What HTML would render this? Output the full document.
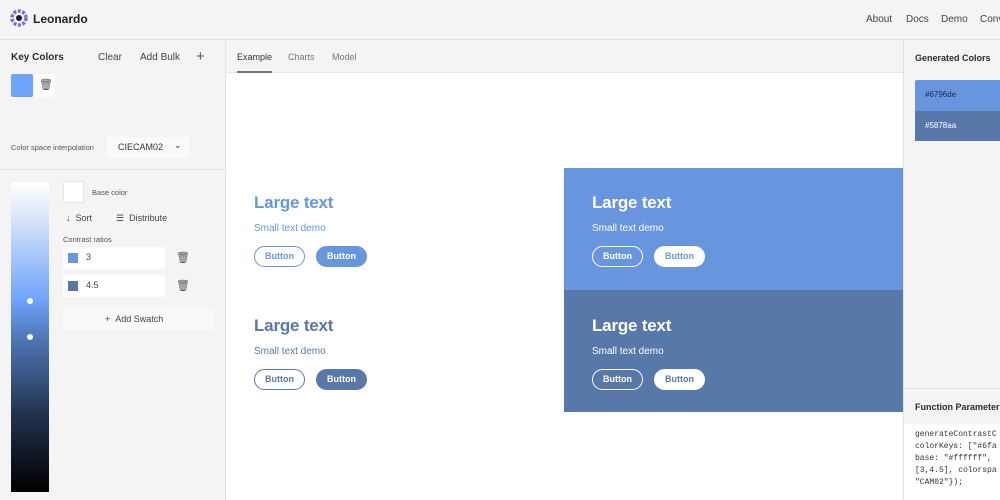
<!DOCTYPE html>
<html><head><style>
*{box-sizing:border-box;margin:0;padding:0}
body{width:1000px;height:500px;overflow:hidden;font-family:"Liberation Sans",sans-serif;background:#f4f4f4;position:relative;color:#2c2c2c}
.a{position:absolute}
.t{font-size:9px;color:#444}
.lg{position:absolute;font-size:17px;font-weight:bold;letter-spacing:-0.2px}
.btn{position:absolute;width:51px;height:21px;border-radius:11px;font-size:9px;font-weight:bold;text-align:center;line-height:18px}
</style></head><body>
<!-- header -->
<div class="a" style="left:0;top:0;width:1000px;height:40px;background:#f4f4f4;border-bottom:1px solid #e2e2e2"></div>
<svg class="a" style="left:10px;top:9px" width="18" height="18" viewBox="0 0 18 18"><circle cx="9" cy="9" r="7" fill="none" stroke="#7a6ee0" stroke-width="3.5" stroke-dasharray="3 1.5"/><circle cx="9" cy="9" r="3" fill="#1a1a3a"/></svg>
<div class="a" style="left:33px;top:12px;font-size:12px;font-weight:bold;color:#222">Leonardo</div>
<div class="a t" style="left:866px;top:14px;font-size:10px">About</div>
<div class="a t" style="left:906px;top:14px;font-size:10px">Docs</div>
<div class="a t" style="left:941px;top:14px;font-size:10px">Demo</div>
<div class="a t" style="left:980px;top:14px;font-size:10px">Conv</div>
<!-- left panel -->
<div class="a" style="left:225px;top:40px;width:1px;height:460px;background:#e2e2e2"></div>
<div class="a" style="left:11px;top:52px;font-size:10px;font-weight:bold">Key Colors</div>
<div class="a t" style="left:98px;top:52px;font-size:10px">Clear</div>
<div class="a t" style="left:140px;top:52px;font-size:10px">Add Bulk</div>
<div class="a" style="left:196px;top:48px;font-size:15px;color:#555">+</div>
<div class="a" style="left:11px;top:74px;width:22px;height:23px;background:#6fa3fb;border-radius:2px"></div>
<div class="a" style="left:34px;top:74px;width:21px;height:23px;background:#fbfbfb"></div>
<div class="a" style="left:39px;top:78px;font-size:11px;color:#555">🗑</div>
<div class="a" style="left:11px;top:143px;font-size:7.5px;color:#555">Color space interpolation</div>
<div class="a" style="left:107px;top:137px;width:82px;height:21px;background:#fafafa;border-radius:2px"></div>
<div class="a" style="left:118px;top:142px;font-size:9px;color:#333">CIECAM02</div>
<div class="a" style="left:174px;top:140px;font-size:9px;color:#333">⌄</div>
<div class="a" style="left:0;top:169px;width:225px;height:1px;background:#e2e2e2"></div>
<div class="a" style="left:11px;top:182px;width:38px;height:310px;background:linear-gradient(#fff 0%,#dfe8f8 10%,#6fa3fb 38%,#4c72b0 52%,#22324e 75%,#000 100%)"></div>
<div class="a" style="left:27px;top:298px;width:6px;height:6px;border-radius:50%;background:#fff"></div>
<div class="a" style="left:27px;top:334px;width:6px;height:6px;border-radius:50%;background:#fff"></div>
<div class="a" style="left:63px;top:181px;width:21px;height:22px;background:#fff;border:1px solid #e6e6e6;border-radius:2px"></div>
<div class="a" style="left:92px;top:188px;font-size:7.5px;color:#555">Base color</div>
<div class="a t" style="left:66px;top:213px">↓ &nbsp;Sort</div>
<div class="a t" style="left:116px;top:213px">☰ &nbsp;Distribute</div>
<div class="a" style="left:63px;top:235px;font-size:7.5px;color:#555">Contrast ratios</div>
<div class="a" style="left:63px;top:247px;width:102px;height:22px;background:#fff;border-radius:2px"></div>
<div class="a" style="left:68px;top:253px;width:10px;height:10px;background:#6796de"></div>
<div class="a t" style="left:86px;top:252px">3</div>
<div class="a" style="left:176px;top:251px;font-size:11px;color:#555">🗑</div>
<div class="a" style="left:63px;top:275px;width:102px;height:22px;background:#fff;border-radius:2px"></div>
<div class="a" style="left:68px;top:281px;width:10px;height:10px;background:#5878aa"></div>
<div class="a t" style="left:86px;top:280px">4.5</div>
<div class="a" style="left:176px;top:279px;font-size:11px;color:#555">🗑</div>
<div class="a" style="left:63px;top:309px;width:151px;height:21px;background:#f9f9f9;border-radius:2px"></div>
<div class="a t" style="left:105px;top:314px">+ &nbsp;Add Swatch</div>
<!-- tabs -->
<div class="a" style="left:226px;top:72px;width:677px;height:428px;background:#fff;border-top:1px solid #e6e6e6"></div>
<div class="a t" style="left:237px;top:52px;color:#333">Example</div>
<div class="a" style="left:237px;top:71px;width:35px;height:2px;background:#777"></div>
<div class="a t" style="left:288px;top:52px;color:#777">Charts</div>
<div class="a t" style="left:332px;top:52px;color:#777">Model</div>
<!-- demos -->
<div class="a" style="left:564px;top:168px;width:339px;height:122px;background:#6796de"></div>
<div class="a" style="left:564px;top:290px;width:339px;height:122px;background:#5878aa"></div>
<div class="lg" style="left:254px;top:193px;color:#6796de">Large text</div>
<div class="a" style="left:254px;top:223px;font-size:10px;color:#6796de">Small text demo</div>
<div class="btn" style="left:254px;top:246px;border:1.5px solid #6796de;color:#6796de">Button</div>
<div class="btn" style="left:316px;top:246px;background:#6796de;color:#fff;border:1.5px solid #6796de">Button</div>
<div class="lg" style="left:254px;top:316px;color:#5878aa">Large text</div>
<div class="a" style="left:254px;top:346px;font-size:10px;color:#5878aa">Small text demo</div>
<div class="btn" style="left:254px;top:369px;border:1.5px solid #5878aa;color:#5878aa">Button</div>
<div class="btn" style="left:316px;top:369px;background:#5878aa;color:#fff;border:1.5px solid #5878aa">Button</div>
<div class="lg" style="left:592px;top:193px;color:#fff">Large text</div>
<div class="a" style="left:592px;top:223px;font-size:10px;color:#fff">Small text demo</div>
<div class="btn" style="left:592px;top:246px;border:1.5px solid #fff;color:#fff">Button</div>
<div class="btn" style="left:654px;top:246px;background:#fff;color:#6796de;border:1.5px solid #fff">Button</div>
<div class="lg" style="left:592px;top:316px;color:#fff">Large text</div>
<div class="a" style="left:592px;top:346px;font-size:10px;color:#fff">Small text demo</div>
<div class="btn" style="left:592px;top:369px;border:1.5px solid #fff;color:#fff">Button</div>
<div class="btn" style="left:654px;top:369px;background:#fff;color:#5878aa;border:1.5px solid #fff">Button</div>
<!-- right panel -->
<div class="a" style="left:903px;top:40px;width:1px;height:460px;background:#e2e2e2"></div>
<div class="a" style="left:915px;top:53px;font-size:9px;font-weight:bold">Generated Colors</div>
<div class="a" style="left:915px;top:80px;width:85px;height:31px;background:#6796de;border-radius:2px 0 0 0"></div>
<div class="a" style="left:925px;top:90px;font-size:8px;color:#1a2a4a">#6796de</div>
<div class="a" style="left:915px;top:111px;width:85px;height:30px;background:#5878aa"></div>
<div class="a" style="left:925px;top:121px;font-size:8px;color:#fff">#5878aa</div>
<div class="a" style="left:904px;top:388px;width:96px;height:1px;background:#e2e2e2"></div>
<div class="a" style="left:915px;top:402px;font-size:9px;font-weight:bold;white-space:nowrap">Function Parameters</div>
<div class="a" style="left:904px;top:424px;width:96px;height:76px;background:#fff"></div>
<div class="a" style="left:915px;top:429px;font-family:'Liberation Mono',monospace;font-size:8px;line-height:12px;color:#333;white-space:pre">generateContrastC
colorKeys: ["#6fa
base: "#ffffff",
[3,4.5], colorspa
"CAM02"});</div>
</body></html>
